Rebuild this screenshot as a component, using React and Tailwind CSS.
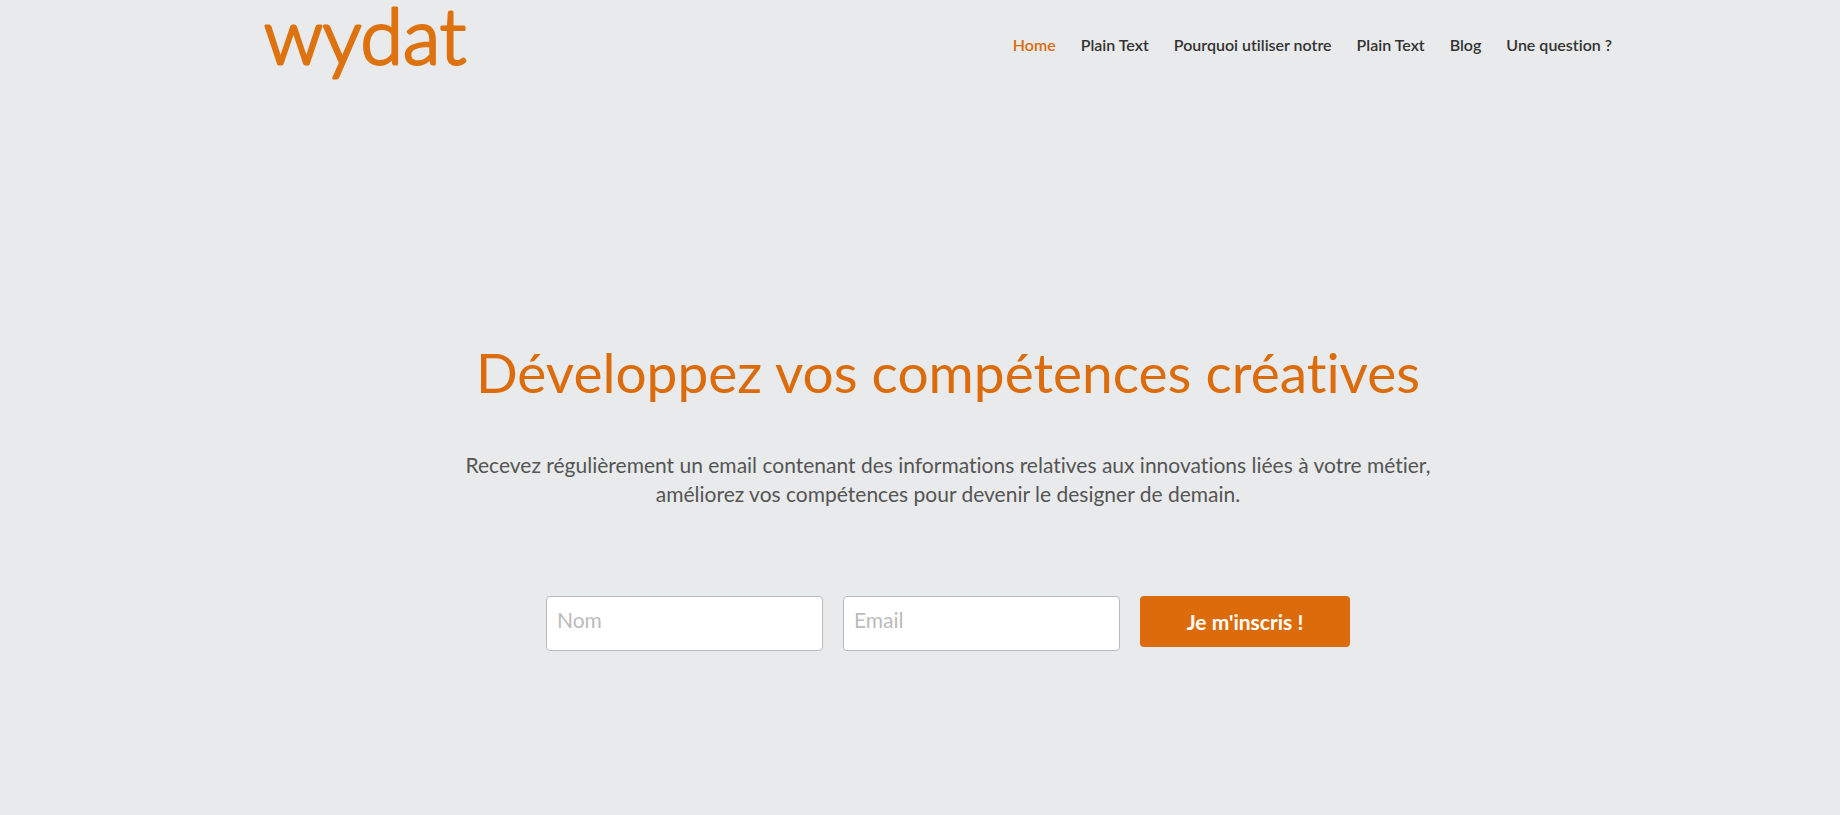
import React, { useState } from 'react';

const links = [
  { label: 'Home', href: '#home' },
  { label: 'Plain Text', href: '#text-1' },
  { label: 'Pourquoi utiliser notre', href: '#pourquoi' },
  { label: 'Plain Text', href: '#text-2' },
  { label: 'Blog', href: '#blog' },
  { label: 'Une question ?', href: '#question' },
];

function Logo() {
  return (
    <a href="#home" aria-label="wydat">
      <svg width="220" height="90" viewBox="0 0 220 90" className="block overflow-visible">
        <text
          x="2"
          y="64"
          fontSize="77"
          fill="#de720f"
          stroke="#de720f"
          strokeWidth="3"
          strokeLinejoin="round"
          className="font-['Lato',sans-serif] font-light"
        >
          wydat
        </text>
      </svg>
    </a>
  );
}

function Header() {
  const [active, setActive] = useState('#home');

  return (
    <header className="flex items-center justify-between pl-[206px] pr-[228px]">
      <Logo />
      <nav className="flex gap-[25px]">
        {links.map(l => (
          <a
            key={l.href}
            href={l.href}
            onClick={() => setActive(l.href)}
            className={`text-base font-semibold whitespace-nowrap ${
              active === l.href ? 'text-[#dc6c0b]' : 'text-[#333333]'
            }`}
          >
            {l.label}
          </a>
        ))}
      </nav>
    </header>
  );
}

function SignupForm() {
  const field =
    'flex-1 min-w-0 h-[55px] rounded border border-[#b9b9b9] bg-white px-2.5 pb-2 text-[21px] text-[#555555] placeholder:text-[#bbbbbb] outline-none';

  return (
    <form className="flex items-start gap-5 w-full max-w-[804px]" onSubmit={e => e.preventDefault()}>
      <input type="text" name="nom" aria-label="Nom" placeholder="Nom" className={field} />
      <input type="email" name="email" aria-label="Email" placeholder="Email" className={field} />
      <button type="submit" className="w-[210px] h-[51px] rounded bg-[#dc6c0b] text-[21px] font-bold text-white">
        Je m'inscris !
      </button>
    </form>
  );
}

export default function App() {
  return (
    <div className="min-h-screen bg-[#e8eaeb] pl-14 font-['Lato','Open_Sans',sans-serif] [font-variant-ligatures:none]">
      <Header />
      <main className="flex flex-col items-center px-6 pt-[246px] pb-40">
        <h1 className="text-[55px] leading-[72px] text-center text-[#dc6c0b]">
          Développez vos compétences créatives
        </h1>
        <p className="mt-[42px] mb-[88px] max-w-[1010px] text-[21px] leading-[29px] text-center text-[#555555]">
          Recevez régulièrement un email contenant des informations relatives aux innovations liées à votre métier,
          améliorez vos compétences pour devenir le designer de demain.
        </p>
        <SignupForm />
      </main>
    </div>
  );
}
